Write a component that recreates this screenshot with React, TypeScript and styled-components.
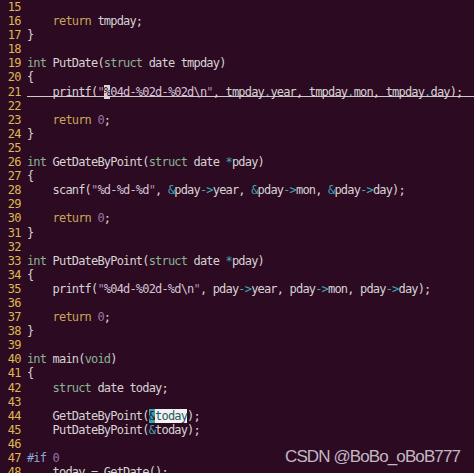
import React from "react";
import styled, { createGlobalStyle, css } from "styled-components";

const GlobalStyle = createGlobalStyle`
  html, body { margin: 0; padding: 0; background: #2c0a22; overflow: hidden; }
`;

const Screen = styled.div`
  position: relative;
  height: 473px;
  overflow: hidden;
  background: #2c0a22;
  padding-left: 1.4px;
  font-family: "DejaVu Sans Mono", "Liberation Mono", monospace;
  font-size: 12px;
  letter-spacing: -0.82px;
  color: #d6d3d3;
`;

const Row = styled.div`
  display: flex;
  height: 14.1px;
  line-height: 14.1px;
  white-space: pre;
`;

const LineNr = styled.span`
  width: 19.2px;
  margin-right: 6.4px;
  text-align: right;
  color: #dfb84e;
  flex: none;
`;

const Code = styled.span<{ $cursorLine?: boolean }>`
  flex: 1;
  ${(p) =>
    p.$cursorLine &&
    css`
      background: linear-gradient(#cfcbcb, #cfcbcb) left bottom 2px / 100% 1px no-repeat;
    `}
`;

type Kind = "plain" | "kw" | "type" | "quote" | "str" | "num" | "op" | "pre";
type Mark = "none" | "cursor" | "selOp" | "sel";

const Tok = styled.span<{ $kind: Kind; $mark: Mark }>`
  color: ${(p) =>
    ({
      plain: "#d6d3d3",
      kw: "#c9a556",
      type: "#88b592",
      quote: "#b987bb",
      str: "#d2c4d4",
      num: "#9576a8",
      op: "#3fa9b3",
      pre: "#8aa8da",
    })[p.$kind]};
  ${(p) =>
    p.$mark === "cursor" &&
    css`
      background: #d8d4d4;
      color: #2c0a22;
    `}
  ${(p) =>
    p.$mark === "selOp" &&
    css`
      background: #2fa6b2;
      color: #2c0a22;
    `}
  ${(p) =>
    p.$mark === "sel" &&
    css`
      background: #f2f2f2;
      color: #1f5a66;
    `}
`;

const Watermark = styled.div`
  position: absolute;
  right: 14px;
  bottom: 8.4px;
  font-family: "Liberation Sans", Arial, sans-serif;
  font-size: 17px;
  line-height: 17px;
  letter-spacing: -0.9px;
  color: #c2b8c2;
  white-space: nowrap;
`;

const SPLIT = /("(?:[^"\\]|\\.)*"|\b(?:int|struct|void|return)\b|#if|\b\d+\b|->|&|\*)/;

function tokenize(text: string, dotsAsOps = false): { kind: Kind; text: string }[] {
  const out: { kind: Kind; text: string }[] = [];
  for (const part of text.split(SPLIT)) {
    if (!part) continue;
    if (part.startsWith('"')) {
      out.push({ kind: "quote", text: '"' });
      out.push({ kind: "str", text: part.slice(1, -1) });
      out.push({ kind: "quote", text: '"' });
    } else if (part === "return") out.push({ kind: "kw", text: part });
    else if (/^(int|struct|void)$/.test(part)) out.push({ kind: "type", text: part });
    else if (part === "#if") out.push({ kind: "pre", text: part });
    else if (/^\d+$/.test(part)) out.push({ kind: "num", text: part });
    else if (part === "->" || part === "&" || part === "*") out.push({ kind: "op", text: part });
    else if (dotsAsOps) {
      for (const p of part.split(/(\.)/)) {
        if (!p) continue;
        out.push({ kind: p === "." ? "op" : "plain", text: p });
      }
    } else out.push({ kind: "plain", text: part });
  }
  return out;
}

type Range = { from: number; to: number; mark: Mark };

function renderLine(text: string, ranges: Range[], dotsAsOps: boolean) {
  const tokens = tokenize(text, dotsAsOps);
  const nodes: React.ReactNode[] = [];
  let pos = 0;
  let key = 0;
  for (const t of tokens) {
    const start = pos;
    const end = pos + t.text.length;
    const cuts = new Set<number>([start, end]);
    for (const r of ranges) {
      if (r.from > start && r.from < end) cuts.add(r.from);
      if (r.to > start && r.to < end) cuts.add(r.to);
    }
    const sorted = [...cuts].sort((a, b) => a - b);
    for (let i = 0; i < sorted.length - 1; i++) {
      const a = sorted[i];
      const b = sorted[i + 1];
      const r = ranges.find((x) => a >= x.from && b <= x.to);
      nodes.push(
        <Tok key={key++} $kind={t.kind} $mark={r ? r.mark : "none"}>
          {t.text.slice(a - start, b - start)}
        </Tok>
      );
    }
    pos = end;
  }
  return nodes;
}

const LINES: { n: number; text: string; ranges?: Range[]; cursorLine?: boolean }[] = [
  { n: 15, text: "" },
  { n: 16, text: "    return tmpday;" },
  { n: 17, text: "}" },
  { n: 18, text: "" },
  { n: 19, text: "int PutDate(struct date tmpday)" },
  { n: 20, text: "{" },
  {
    n: 21,
    text: '    printf("%04d-%02d-%02d\\n", tmpday.year, tmpday.mon, tmpday.day);',
    ranges: [{ from: 12, to: 13, mark: "cursor" }],
    cursorLine: true,
  },
  { n: 22, text: "" },
  { n: 23, text: "    return 0;" },
  { n: 24, text: "}" },
  { n: 25, text: "" },
  { n: 26, text: "int GetDateByPoint(struct date *pday)" },
  { n: 27, text: "{" },
  { n: 28, text: '    scanf("%d-%d-%d", &pday->year, &pday->mon, &pday->day);' },
  { n: 29, text: "" },
  { n: 30, text: "    return 0;" },
  { n: 31, text: "}" },
  { n: 32, text: "" },
  { n: 33, text: "int PutDateByPoint(struct date *pday)" },
  { n: 34, text: "{" },
  { n: 35, text: '    printf("%04d-%02d-%d\\n", pday->year, pday->mon, pday->day);' },
  { n: 36, text: "" },
  { n: 37, text: "    return 0;" },
  { n: 38, text: "}" },
  { n: 39, text: "" },
  { n: 40, text: "int main(void)" },
  { n: 41, text: "{" },
  { n: 42, text: "    struct date today;" },
  { n: 43, text: "" },
  {
    n: 44,
    text: "    GetDateByPoint(&today);",
    ranges: [
      { from: 19, to: 20, mark: "selOp" },
      { from: 20, to: 25, mark: "sel" },
    ],
  },
  { n: 45, text: "    PutDateByPoint(&today);" },
  { n: 46, text: "" },
  { n: 47, text: "#if 0" },
  { n: 48, text: "    today = GetDate();" },
];

export default function App() {
  return (
    <>
      <GlobalStyle />
      <Screen>
        {LINES.map((l) => (
          <Row key={l.n}>
            <LineNr>{l.n}</LineNr>
            <Code $cursorLine={l.cursorLine}>
              {renderLine(l.text, l.ranges ?? [], !!l.cursorLine)}
            </Code>
          </Row>
        ))}
        <Watermark>CSDN @BoBo_oBoB777</Watermark>
      </Screen>
    </>
  );
}
